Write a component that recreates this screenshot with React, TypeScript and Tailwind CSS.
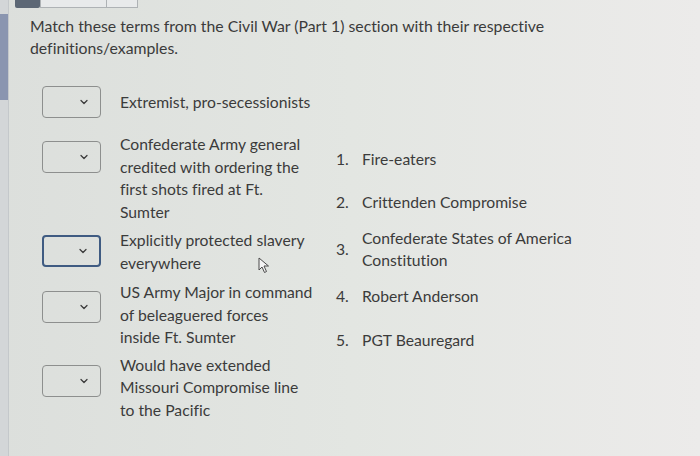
import React from 'react';
import { ChevronDown } from 'lucide-react';

interface Row {
  lines: string[];
  active?: boolean;
  single?: boolean;
  gap: string;
  offset: string;
}

const rows: Row[] = [
  { lines: ['Extremist, pro-secessionists'], single: true, gap: 'mt-0', offset: '' },
  {
    lines: ['Confederate Army general', 'credited with ordering the', 'first shots fired at Ft.', 'Sumter'],
    gap: 'mt-[15px]',
    offset: 'mt-[8px]',
  },
  { lines: ['Explicitly protected slavery', 'everywhere'], active: true, gap: 'mt-[6px]', offset: 'mt-[6px]' },
  { lines: ['US Army Major in command', 'of beleaguered forces', 'inside Ft. Sumter'], gap: 'mt-[7px]', offset: 'mt-[10px]' },
  { lines: ['Would have extended', 'Missouri Compromise line', 'to the Pacific'], gap: 'mt-[5px]', offset: 'mt-[11px]' },
];

const answers = [
  { n: '1.', lines: ['Fire-eaters'], gap: 'mt-0' },
  { n: '2.', lines: ['Crittenden Compromise'], gap: 'mt-[21px]' },
  { n: '3.', lines: ['Confederate States of America', 'Constitution'], gap: 'mt-[14px]' },
  { n: '4.', lines: ['Robert Anderson'], gap: 'mt-[14px]' },
  { n: '5.', lines: ['PGT Beauregard'], gap: 'mt-[22px]' },
];

const Select: React.FC<{ active?: boolean; offset: string }> = ({ active, offset }) => (
  <div
    className={`w-[59px] h-[32px] shrink-0 rounded-[4px] flex items-center justify-end pr-[10px] ${offset} ${
      active ? 'border-2 border-[#3f5b82]' : 'border border-[#8d8f8e]'
    }`}
  >
    <ChevronDown size={12} strokeWidth={2.5} className="text-[#3a3a3a]" />
  </div>
);

export default function App() {
  return (
    <div className="w-[700px] h-[456px] flex overflow-hidden bg-gradient-to-r from-[#dcdfdc] via-[#e3e6e2] to-[#ecebea] text-[#3b3b3b] font-['Lato','Liberation_Sans',sans-serif] [font-variant-ligatures:none]">
      <aside className="w-[9px] shrink-0 flex flex-col bg-[#d3d6d8] border-r border-[#c4c8cb]">
        <div className="h-[14px]" />
        <div className="h-[86px] bg-[#8a95b0]" />
      </aside>

      <main className="flex-1 flex flex-col relative">
        <div className="flex h-[8px] ml-[6px]">
          <div className="w-[25px] bg-[#5c6775] rounded-b-[2px]" />
          <div className="w-[67px] bg-[#e8eaeb] border border-t-0 border-[#aeb2b5]" />
          <div className="w-[31px] bg-[#e8eaeb] border border-t-0 border-l-0 border-[#aeb2b5]" />
        </div>

        <p className="mt-[7px] ml-[21px] w-[540px] text-[15.8px] leading-[22px]">
          Match these terms from the Civil War (Part 1) section with their respective definitions/examples.
        </p>

        <div className="flex mt-[27px] ml-[33px]">
          <div className="flex flex-col w-[278px]">
            {rows.map((r, i) => (
              <div key={i} className={`flex ${r.single ? 'items-center' : 'items-start'} ${r.gap}`}>
                <Select active={r.active} offset={r.offset} />
                <div className="ml-[19px] w-[200px] text-[15.7px] leading-[22.5px]">
                  {r.lines.map((l) => (
                    <div key={l}>{l}</div>
                  ))}
                </div>
              </div>
            ))}
          </div>

          <ol className="flex flex-col mt-[62px] ml-[16px]">
            {answers.map((a) => (
              <li key={a.n} className={`flex items-center ${a.gap} text-[15.7px] leading-[22px]`}>
                <span className="w-[26px] shrink-0">{a.n}</span>
                <div className="w-[222px]">
                  {a.lines.map((l) => (
                    <div key={l}>{l}</div>
                  ))}
                </div>
              </li>
            ))}
          </ol>
        </div>

        <svg
          className="absolute left-[249px] top-[257px]"
          width="12"
          height="17"
          viewBox="0 0 12 17"
          fill="none"
        >
          <path d="M1 1 L1 13 L4 10 L6.5 15.5 L8.5 14.5 L6 9 L10.5 9 Z" fill="#f4f4f4" stroke="#4a4a4a" strokeWidth="1" strokeLinejoin="round" />
        </svg>
      </main>
    </div>
  );
}
